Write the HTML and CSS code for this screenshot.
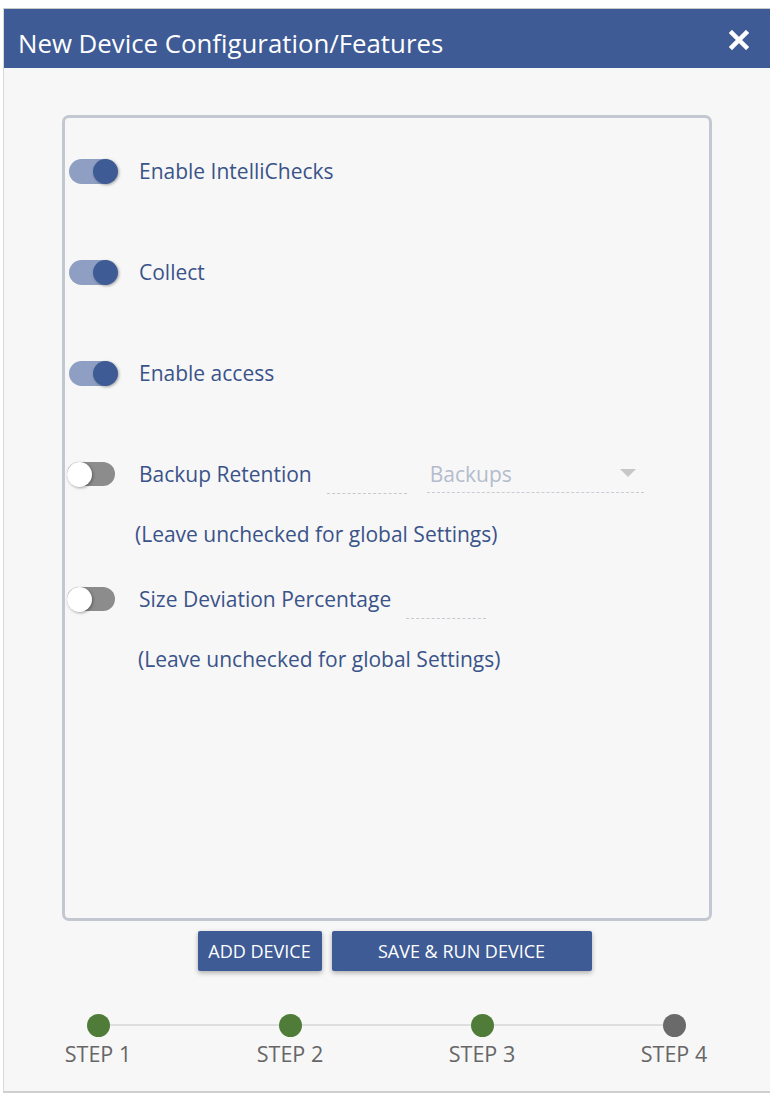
FILE: index.html
```html
<!DOCTYPE html>
<html>
<head>
<meta charset="utf-8">
<link rel="stylesheet" href="styles.css">
</head>
<body>
<div class="dialog">
  <div class="header">
    <span class="title">New Device Configuration/Features</span>
    <svg class="close" width="20" height="20" viewBox="0 0 20 20"><path d="M3 3 L17 17 M17 3 L3 17" stroke="#ffffff" stroke-width="4.5" stroke-linecap="square"/></svg>
  </div>
  <div class="body">
    <div class="panel">
      <div class="row">
        <span class="toggle on"><span class="thumb"></span></span>
        <span class="label">Enable IntelliChecks</span>
      </div>
      <div class="row">
        <span class="toggle on"><span class="thumb"></span></span>
        <span class="label">Collect</span>
      </div>
      <div class="row">
        <span class="toggle on"><span class="thumb"></span></span>
        <span class="label">Enable access</span>
      </div>
      <div class="row row-field">
        <span class="toggle off"><span class="thumb"></span></span>
        <span class="label">Backup Retention</span>
        <span class="field f1"></span>
        <span class="select">Backups<span class="caret"></span></span>
      </div>
      <div class="note">(Leave unchecked for global Settings)</div>
      <div class="row row-field row-size">
        <span class="toggle off"><span class="thumb"></span></span>
        <span class="label">Size Deviation Percentage</span>
        <span class="field f2"></span>
      </div>
      <div class="note note2">(Leave unchecked for global Settings)</div>
    </div>
    <div class="actions">
      <button class="btn btn-add">ADD DEVICE</button>
      <button class="btn btn-save">SAVE &amp; RUN DEVICE</button>
    </div>
    <div class="stepper">
      <div class="line"></div>
      <div class="step"><span class="dot done"></span><span class="slabel">STEP 1</span></div>
      <div class="step"><span class="dot done"></span><span class="slabel">STEP 2</span></div>
      <div class="step"><span class="dot done"></span><span class="slabel">STEP 3</span></div>
      <div class="step"><span class="dot todo"></span><span class="slabel">STEP 4</span></div>
    </div>
  </div>
</div>
</body>
</html>
```
FILE: styles.css
```css
* { box-sizing: border-box; }
html, body { margin: 0; padding: 0; background: #ffffff; }
body { font-family: "Open Sans", "Noto Sans", sans-serif; }

.dialog {
  margin: 8px 0 0 3px;
  width: 767px;
  height: 1085px;
  border-top: 1px solid #c8c8c8;
  border-left: 1px solid #d8d8d8;
  border-bottom: 2px solid #cfcfcf;
  background: #f7f7f7;
  display: flex;
  flex-direction: column;
}

.header {
  height: 59px;
  background: #3e5b95;
  display: flex;
  align-items: center;
  justify-content: space-between;
  padding: 8px 21px 0 14px;
  color: #ffffff;
}
.title { font-size: 25.8px; line-height: 36px; }
.close { display: block; margin-top: -6px; }

.body {
  flex: 1;
  display: flex;
  flex-direction: column;
  padding: 47px 58px 0 58px;
}

.panel {
  height: 806px;
  border: 3px solid #c3c7d1;
  border-radius: 7px;
  padding: 27px 0 0 4px;
  color: #3a5389;
}

.row {
  display: flex;
  align-items: center;
  height: 52px;
  margin-bottom: 49px;
}
.label { font-size: 21px; margin-left: 22px; }

.toggle {
  position: relative;
  width: 48px;
  height: 25px;
  border-radius: 13px;
  flex: none;
}
.toggle.on { background: #8e9fc3; }
.toggle.off { background: #8c8c8c; margin-left: -2px; margin-right: 2px; height: 24px; }
.thumb {
  position: absolute;
  top: 0;
  width: 25px;
  height: 25px;
  border-radius: 50%;
  box-shadow: 1px 1px 3px rgba(0,0,0,0.35);
}
.toggle.on .thumb { right: -1px; background: #3e5b95; }
.toggle.off .thumb { left: 0; top: -0.5px; background: #ffffff; }

.row-field { margin-bottom: 20px; }
.field {
  align-self: flex-end;
  border-bottom: 1px dashed #c4c8d0;
  height: 10px;
  width: 80px;
  margin-bottom: 6px;
}
.f1 { margin-left: 15px; }
.f2 { margin-left: 15px; }
.select {
  position: relative;
  margin-left: 20px;
  width: 217px;
  font-size: 21px;
  line-height: 28px;
  color: #b3bccd;
  padding: 0 0 4px 3px;
  border-bottom: 1px dashed #c8ccd4;
  align-self: flex-end;
  margin-bottom: 7px;
}
.caret {
  position: absolute;
  right: 8px;
  top: 9px;
  border-left: 8px solid transparent;
  border-right: 8px solid transparent;
  border-top: 8px solid #c7c7c7;
}

.note { font-size: 21px; line-height: 28px; margin-left: 66px; margin-bottom: 25px; }
.row-size { margin-bottom: 20px; }
.note2 { margin-left: 69px; }

.actions {
  display: flex;
  justify-content: center;
  gap: 10px;
  margin-top: 10px;
  padding-left: 15px;
}
.btn {
  height: 40px;
  border: none;
  border-radius: 2px;
  background: #3e5b95;
  color: #ffffff;
  font-family: "Open Sans", "Noto Sans", sans-serif;
  font-size: 18px;
  box-shadow: 0 2px 5px rgba(0,0,0,0.3);
  padding: 0;
}
.btn-add { width: 124px; }
.btn-save { width: 260px; }

.stepper {
  position: relative;
  display: flex;
  justify-content: space-between;
  margin: 43px 0 0 -4px;
  width: 656px;
}
.line {
  position: absolute;
  top: 10px;
  left: 40px;
  right: 40px;
  height: 2px;
  background: #dedede;
}
.step {
  position: relative;
  display: flex;
  flex-direction: column;
  align-items: center;
  width: 80px;
}
.dot {
  width: 23px;
  height: 23px;
  border-radius: 50%;
}
.dot.done { background: #4f7c38; }
.dot.todo { background: #6a6a6a; }
.slabel {
  margin-top: 2px;
  font-size: 21.5px;
  line-height: 29px;
  color: #666666;
}
```
